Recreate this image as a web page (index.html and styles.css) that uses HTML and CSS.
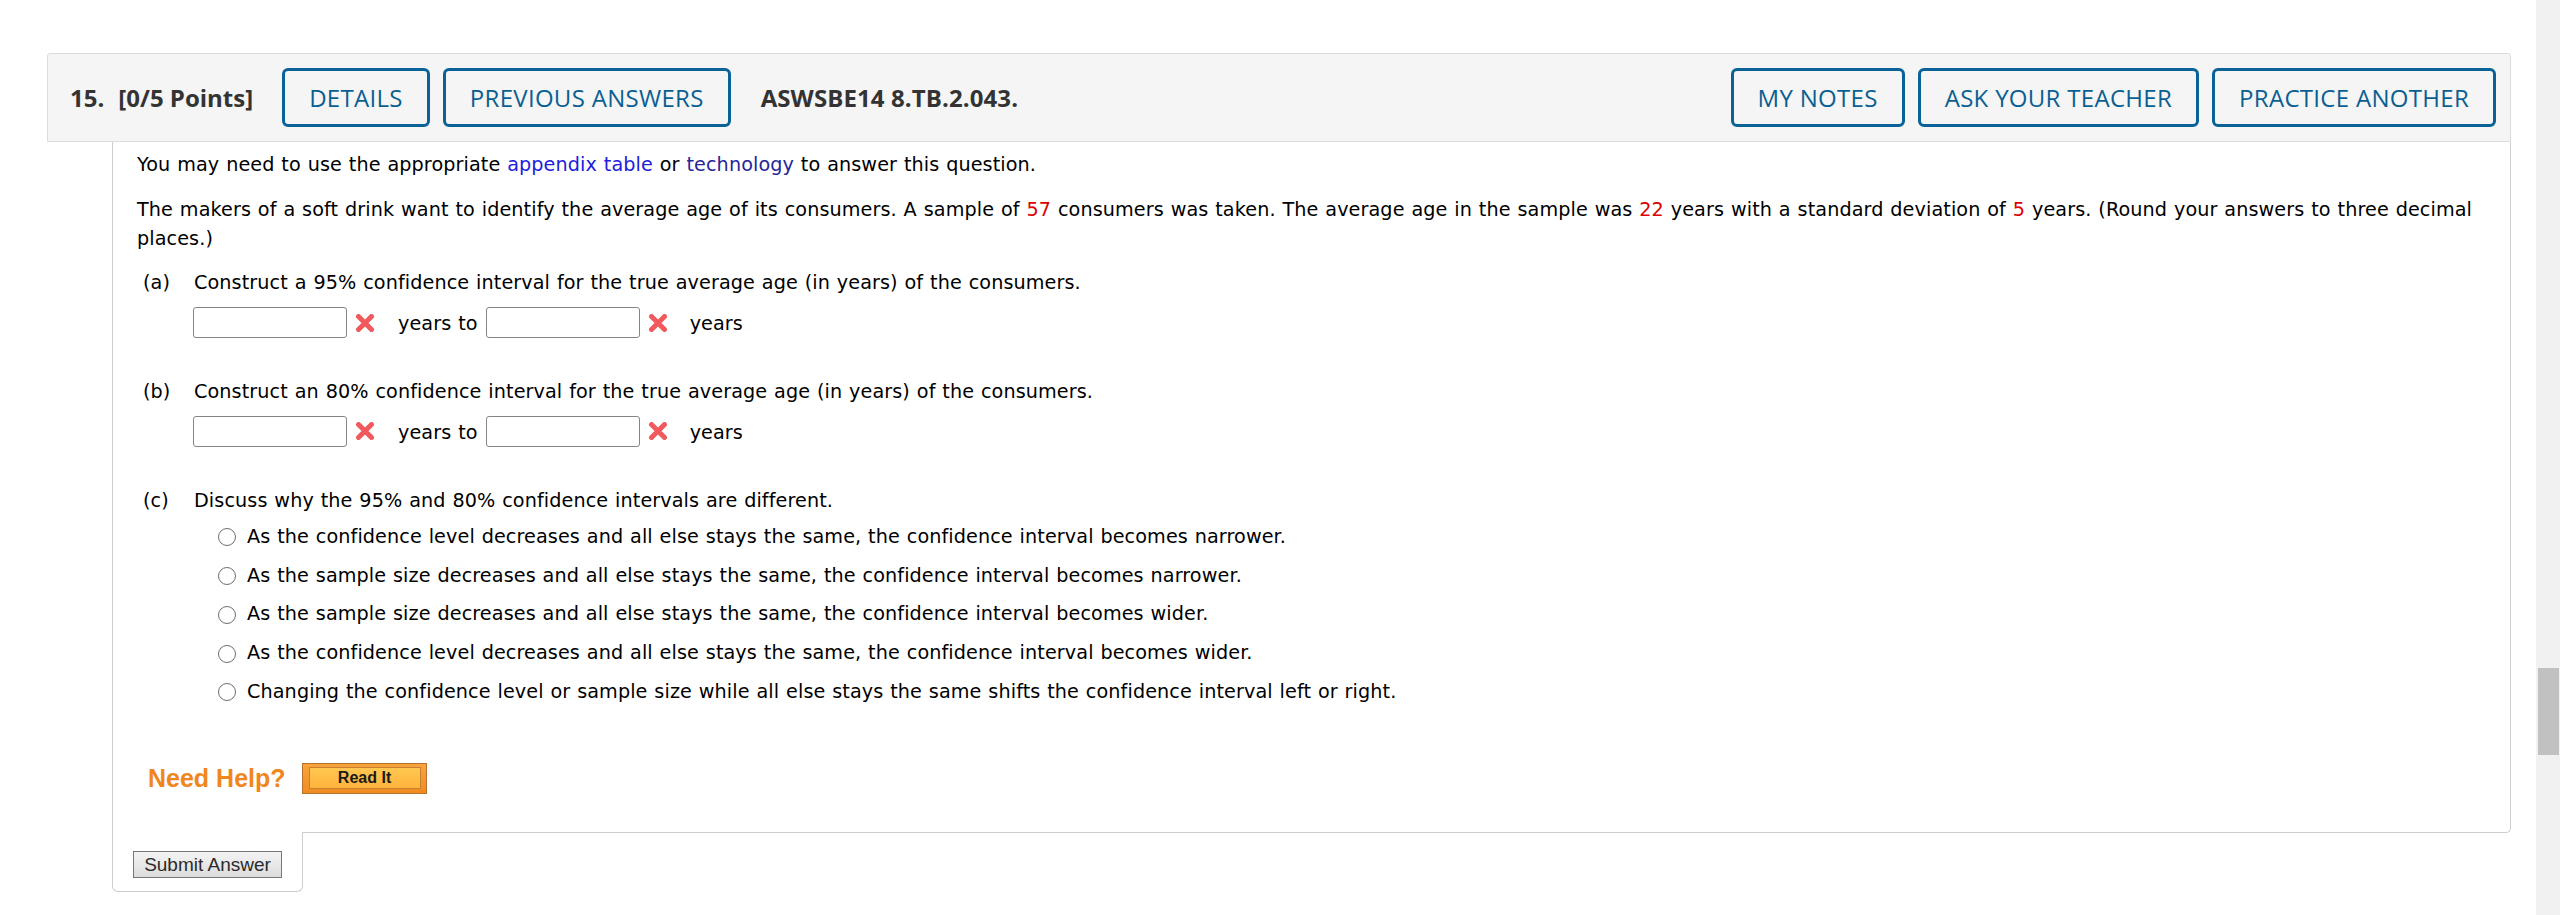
FILE: index.html
```html
<!DOCTYPE html>
<html lang="en">
<head>
<meta charset="utf-8">
<title>Question 15</title>
<link rel="stylesheet" href="styles.css">
</head>
<body>
<div class="layout">
  <div class="page">
    <div class="qheader">
      <span class="qnum">15.</span>
      <span class="qpoints">[0/5 Points]</span>
      <span class="btn">DETAILS</span>
      <span class="btn">PREVIOUS ANSWERS</span>
      <span class="qcode">ASWSBE14 8.TB.2.043.</span>
      <div class="right">
        <span class="btn">MY NOTES</span>
        <span class="btn">ASK YOUR TEACHER</span>
        <span class="btn">PRACTICE ANOTHER</span>
      </div>
    </div>

    <div class="qbody">
      <p>You may need to use the appropriate <a class="link" href="#">appendix table</a> or <a class="link visited" href="#">technology</a> to answer this question.</p>
      <p>The makers of a soft drink want to identify the average age of its consumers. A sample of <span class="red">57</span> consumers was taken. The average age in the sample was <span class="red">22</span> years with a standard deviation of <span class="red">5</span> years. (Round your answers to three decimal<br>places.)</p>

      <div class="part">
        <div class="qline"><span class="plabel">(a)</span><span>Construct a 95% confidence interval for the true average age (in years) of the consumers.</span></div>
        <div class="answer-row">
          <span class="field"></span>
          <svg class="xmark" width="20" height="18" viewBox="0 0 20 18"><path d="M3.5 2.5 L16.5 15.5 M16.5 2.5 L3.5 15.5" stroke="#f15a5c" stroke-width="5" stroke-linecap="round"/></svg>
          <span class="unit">years to</span>
          <span class="field field2"></span>
          <svg class="xmark" width="20" height="18" viewBox="0 0 20 18"><path d="M3.5 2.5 L16.5 15.5 M16.5 2.5 L3.5 15.5" stroke="#f15a5c" stroke-width="5" stroke-linecap="round"/></svg>
          <span class="unit unit2">years</span>
        </div>
      </div>

      <div class="part gap">
        <div class="qline"><span class="plabel">(b)</span><span>Construct an 80% confidence interval for the true average age (in years) of the consumers.</span></div>
        <div class="answer-row">
          <span class="field"></span>
          <svg class="xmark" width="20" height="18" viewBox="0 0 20 18"><path d="M3.5 2.5 L16.5 15.5 M16.5 2.5 L3.5 15.5" stroke="#f15a5c" stroke-width="5" stroke-linecap="round"/></svg>
          <span class="unit">years to</span>
          <span class="field field2"></span>
          <svg class="xmark" width="20" height="18" viewBox="0 0 20 18"><path d="M3.5 2.5 L16.5 15.5 M16.5 2.5 L3.5 15.5" stroke="#f15a5c" stroke-width="5" stroke-linecap="round"/></svg>
          <span class="unit unit2">years</span>
        </div>
      </div>

      <div class="part gap">
        <div class="qline"><span class="plabel">(c)</span><span>Discuss why the 95% and 80% confidence intervals are different.</span></div>
        <ul class="options">
          <li><span class="radio"></span><span>As the confidence level decreases and all else stays the same, the confidence interval becomes narrower.</span></li>
          <li><span class="radio"></span><span>As the sample size decreases and all else stays the same, the confidence interval becomes narrower.</span></li>
          <li><span class="radio"></span><span>As the sample size decreases and all else stays the same, the confidence interval becomes wider.</span></li>
          <li><span class="radio"></span><span>As the confidence level decreases and all else stays the same, the confidence interval becomes wider.</span></li>
          <li><span class="radio"></span><span>Changing the confidence level or sample size while all else stays the same shifts the confidence interval left or right.</span></li>
        </ul>
      </div>

      <div class="help">
        <span class="needhelp">Need Help?</span>
        <span class="readit"><span>Read It</span></span>
      </div>
    </div>

    <div class="submit-tab">
      <span class="submit">Submit Answer</span>
    </div>
  </div>
  <div class="scrollbar"><div class="thumb"></div></div>
</div>
</body>
</html>
```

FILE: styles.css
```css
* { box-sizing: border-box; }

html, body {
  margin: 0;
  padding: 0;
  background: #fff;
  overflow: hidden;
}

body {
  font-family: "DejaVu Sans", Verdana, sans-serif;
  font-size: 19.2px;
  color: #000;
}

.layout {
  display: flex;
  height: 915px;
}

.page {
  flex: 1;
  padding: 53px 25px 0 47px;
}

.scrollbar {
  width: 24px;
  background: #f1f1f1;
  padding: 668px 1px 0 2px;
}

.thumb {
  height: 87px;
  background: #c1c1c1;
}

/* header */
.qheader {
  display: flex;
  align-items: center;
  height: 89px;
  background: #f5f5f5;
  border: 1px solid #dcdcdc;
  border-radius: 3px 3px 0 0;
  padding: 0 14px 0 22px;
  font-family: "Open Sans", sans-serif;
  font-size: 24px;
  color: #333;
  white-space: nowrap;
}

.qnum { font-weight: 700; margin-right: 14px; }
.qpoints { font-weight: 700; margin-right: 29px; }
.qcode { font-weight: 700; margin-left: 30px; letter-spacing: 0.1px; }

.btn {
  display: inline-block;
  border: 3px solid #0a6398;
  border-radius: 6px;
  padding: 10px 24px;
  line-height: 33px;
  color: #0a5f92;
  background: #f5f5f5;
  letter-spacing: 0.3px;
}

.btn + .btn { margin-left: 13px; }

.right {
  margin-left: auto;
  display: flex;
}

/* body */
.qbody {
  margin-left: 65px;
  border: 1px solid #cdcdcd;
  border-top: none;
  border-radius: 0 0 5px 0;
  padding: 9px 10px 38px 24px;
  line-height: 28.8px;
  word-spacing: 0.65px;
  letter-spacing: 0.1px;
}

.qbody p { margin: 0 0 16px; }

.link { color: #2020dc; text-decoration: none; }
.link.visited { color: #26269a; }
.red { color: #dd0000; }

.part { padding-left: 6px; }
.part.gap { margin-top: 40px; }

.qline { display: flex; }
.plabel { width: 51px; flex: none; }

.answer-row {
  display: flex;
  align-items: center;
  margin-top: 9px;
  padding-left: 50px;
  height: 31px;
}

.field {
  width: 154px;
  height: 31px;
  border: 1px solid #858585;
  border-radius: 3px;
  background: #fff;
}

.xmark { margin-left: 8px; flex: none; }
.unit { margin-left: 23px; margin-right: 8px; padding-top: 4px; }
.unit2 { margin-left: 22px; margin-right: 0; }

.options {
  list-style: none;
  margin: 7px 0 0;
  padding: 0 0 0 75px;
}

.options li {
  display: flex;
  align-items: center;
  margin-bottom: 10px;
}

.options li:last-child { margin-bottom: 0; }

.radio {
  width: 18px;
  height: 18px;
  border: 1px solid #6e6e6e;
  border-radius: 50%;
  background: #fff;
  margin-right: 11px;
  flex: none;
}

/* help */
.help {
  display: flex;
  align-items: center;
  margin-top: 56px;
  padding-left: 11px;
  letter-spacing: 0;
  word-spacing: 0;
}

.needhelp {
  font-family: "Liberation Sans", Arial, sans-serif;
  font-weight: 700;
  font-size: 25px;
  color: #f0861c;
  margin-right: 16px;
}

.readit {
  display: flex;
  width: 125px;
  height: 31px;
  border: 1px solid #b8722a;
  background: linear-gradient(#f9a43e, #f08b20);
  padding: 3px 5px 4px 6px;
}

.readit span {
  flex: 1;
  border: 1px solid #c6802f;
  background: linear-gradient(#ffc850, #ffb43c);
  font-family: "Liberation Sans", Arial, sans-serif;
  font-weight: 700;
  font-size: 16px;
  line-height: 20px;
  text-align: center;
  color: #1a1a1a;
}

/* submit tab */
.submit-tab {
  margin-left: 65px;
  margin-top: -1px;
  width: 191px;
  background: #fff;
  border: 1px solid #cdcdcd;
  border-top: none;
  border-radius: 0 0 6px 6px;
  padding: 19px 20px 13px;
}

.submit {
  display: block;
  width: 149px;
  height: 27px;
  border: 1px solid #767676;
  background: linear-gradient(#f4f4f4, #dcdcdc);
  font-family: "Liberation Sans", Arial, sans-serif;
  font-size: 19px;
  line-height: 25px;
  text-align: center;
  color: #2a2a2a;
  white-space: nowrap;
}
```
